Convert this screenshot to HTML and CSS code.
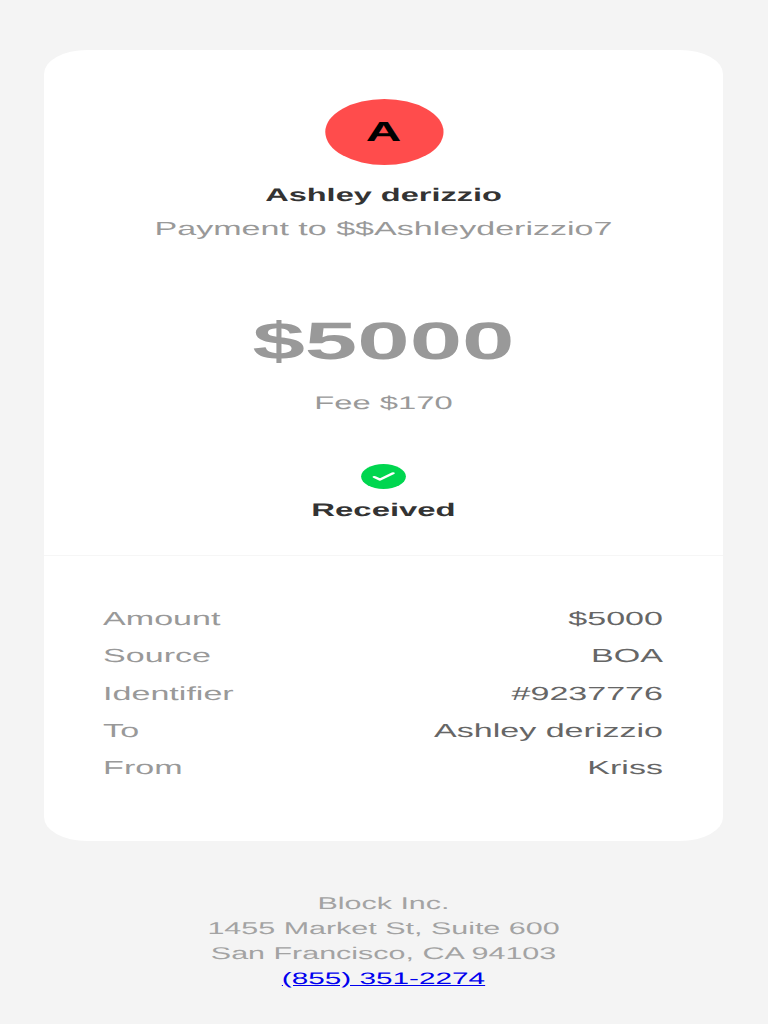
FILE: index.html
```html
<!DOCTYPE html>
<html lang="en">
<head>
<meta charset="utf-8">
<title>Payment receipt</title>
<link rel="stylesheet" href="styles.css">
</head>
<body>
<div class="page">
  <main class="card">
    <section class="summary">
      <div class="avatar">A</div>
      <div class="name">Ashley derizzio</div>
      <div class="note">Payment to $$Ashleyderizzio7</div>
      <div class="amount">$5000</div>
      <div class="fee">Fee $170</div>
      <svg class="check" viewBox="0 0 25 25" aria-hidden="true">
        <circle cx="12.5" cy="12.5" r="12.5" fill="#00d64f"/>
        <path d="M7.4 13l3.2 2.6 7.2-6.4" fill="none" stroke="#fff" stroke-width="2" stroke-linecap="round" stroke-linejoin="round"/>
      </svg>
      <div class="status">Received</div>
    </section>
    <section class="details">
      <div class="row"><span class="label">Amount</span><span class="value">$5000</span></div>
      <div class="row"><span class="label">Source</span><span class="value">BOA</span></div>
      <div class="row"><span class="label">Identifier</span><span class="value">#9237776</span></div>
      <div class="row"><span class="label">To</span><span class="value">Ashley derizzio</span></div>
      <div class="row"><span class="label">From</span><span class="value">Kriss</span></div>
    </section>
  </main>
  <footer class="footer">
    <div>Block Inc.</div>
    <div>1455 Market St, Suite 600</div>
    <div>San Francisco, CA 94103</div>
    <a class="phone" href="#">(855) 351-2274</a>
  </footer>
</div>
</body>
</html>
```
FILE: styles.css
```css
html, body {
  margin: 0;
  height: 1024px;
  overflow: hidden;
  background: #f4f4f4;
}
.page {
  width: 428px;
  height: 1024px;
  box-sizing: border-box;
  padding: 50px 25px 0 24px;
  font-family: "Liberation Sans", Arial, sans-serif;
  text-rendering: geometricPrecision;
  transform: translateX(1px) scaleX(1.7916);
  transform-origin: 0 0;
}
.card {
  background: #fff;
  border-radius: 24px;
  height: 791px;
}
.summary {
  height: 506px;
  box-sizing: border-box;
  padding-top: 49px;
  display: flex;
  flex-direction: column;
  align-items: center;
  border-bottom: 1px solid #f6f6f6;
}
.avatar {
  width: 66px;
  height: 66px;
  border-radius: 50%;
  background: #ff4c4c;
  color: #000;
  font-size: 27.5px;
  font-weight: 700;
  line-height: 66px;
  text-align: center;
}
.name {
  margin-top: 18px;
  font-size: 18.15px;
  font-weight: 700;
  line-height: 24px;
  color: #333;
}
.note {
  margin-top: 11px;
  font-size: 19px;
  line-height: 24px;
  color: #999;
}
.amount {
  margin-top: 70px;
  font-size: 52.6px;
  font-weight: 700;
  line-height: 60px;
  color: #999;
}
.fee {
  margin-top: 19px;
  font-size: 18.3px;
  line-height: 24px;
  color: #999;
}
.check {
  display: block;
  width: 25px;
  height: 25px;
  margin-top: 49px;
}
.status {
  margin-top: 9px;
  font-size: 18.35px;
  font-weight: 700;
  line-height: 24px;
  color: #333;
}
.details {
  padding: 45px 33.5px 0 33px;
  display: flex;
  flex-direction: column;
}
.row {
  display: flex;
  justify-content: space-between;
  font-size: 19px;
  line-height: 37.25px;
}
.label { color: #999; }
.value { color: #666; }
.footer {
  margin-top: 50px;
  text-align: center;
  font-size: 17px;
  line-height: 25px;
  color: #a3a3a3;
}
.phone {
  font-size: 16.6px;
  color: #0000ee;
  text-decoration: underline;
}
```
